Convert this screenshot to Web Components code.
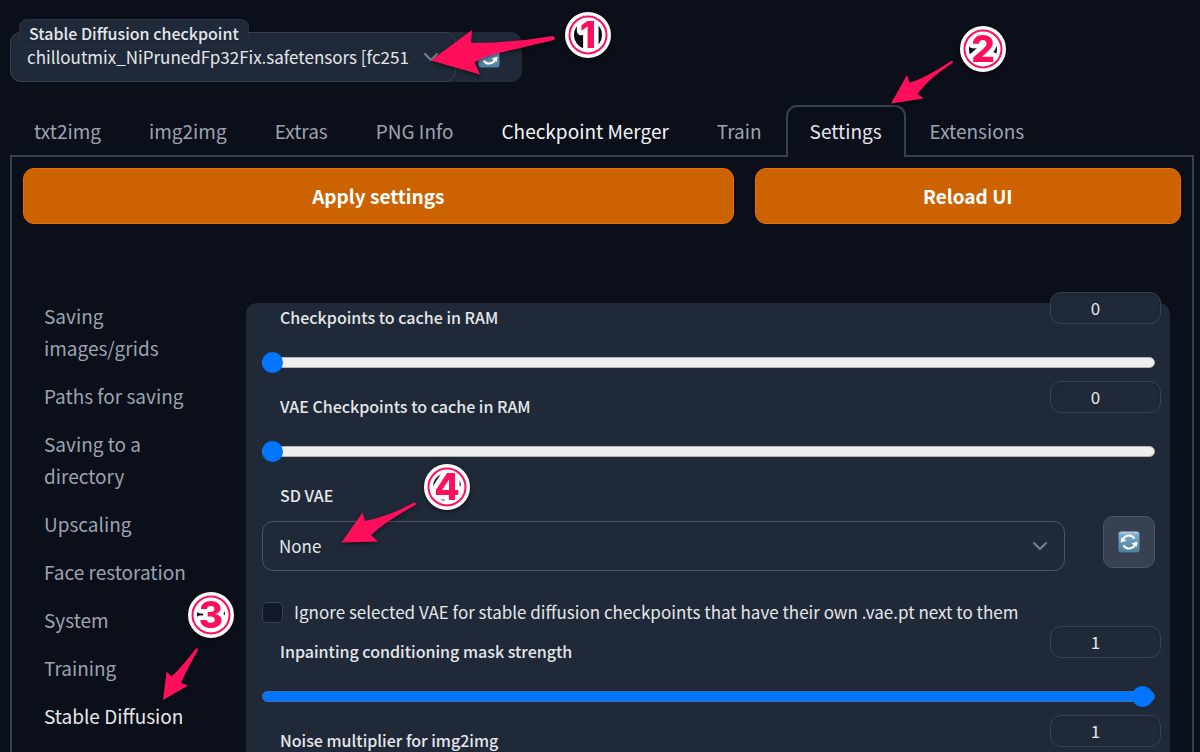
<!DOCTYPE html>
<html lang="en">
<head>
<meta charset="utf-8">
<meta name="viewport" content="width=device-width, initial-scale=1">
<title>Stable Diffusion</title>
<style>
  :root {
    --bg: #0b0f19;
    --block: #1f2937;
    --line: #374151;
    --line-strong: #4b5563;
    --text: #e5e7eb;
    --muted: #9ca3af;
    --accent: #cc6300;
    --blue: #0075ff;
    --pink: #ff0f5b;
    --radius: 11px;
    --fs-sm: 16px;
    --fs: 17px;
    --fs-lg: 19px;
  }
  html, body { height: 100%; }
  body {
    margin: 0;
    background: var(--bg);
    color: var(--text);
    font-family: "Noto Sans CJK JP", "Noto Sans", sans-serif;
    font-size: var(--fs);
  }
</style>
</head>
<body>
<sd-app></sd-app>

<script>
const define = (name, html, setup) => {
  const template = document.createElement('template');
  template.innerHTML = `<style>
    *, *::before, *::after { box-sizing: border-box; }
    button, input, select { font: inherit; color: inherit; margin: 0; }
  </style>${html}`;
  customElements.define(name, class extends HTMLElement {
    constructor() {
      super();
      this.attachShadow({ mode: 'open' }).append(template.content.cloneNode(true));
    }
    connectedCallback() { if (setup) setup(this, this.shadowRoot); }
  });
};

define('sd-refresh', `
  <style>
    :host { display: block; }
    button { display: flex; align-items: center; justify-content: center; width: 100%; height: 100%;
      padding: 0; border: 1px solid var(--line-strong); border-radius: 10px; background: var(--line); }
    :host([plain]) button { border-color: transparent; background: none; }
    svg { display: block; width: 22px; height: 22px; }
  </style>
  <button aria-label="Refresh">
    <svg viewBox="0 0 22 22">
      <defs><linearGradient id="g" x2="0" y2="1">
        <stop offset="0" stop-color="#b4d3e4"/><stop offset=".2" stop-color="#75a6c6"/><stop offset="1" stop-color="#4f7f9f"/>
      </linearGradient></defs>
      <rect x=".5" y=".5" width="21" height="21" rx="3" fill="url(#g)"/>
      <g fill="none" stroke="#fff" stroke-width="2.2">
        <path d="M4.6 10.2A6.4 6.4 0 0 1 16.4 7.6"/><path d="M17.4 11.8A6.4 6.4 0 0 1 5.6 14.4"/>
      </g>
      <path d="M2.6 11.6 3.4 6.2 8.4 9.8ZM19.6 10.4 18.8 15.8 13.4 12.4Z" fill="#fff"/>
    </svg>
  </button>`);

define('sd-dropdown', `
  <style>
    :host { display: block; position: relative; height: 50px; }
    select { appearance: none; display: block; width: 100%; height: 100%; padding: 0 40px 0 16px; line-height: 26px;
      border: 1px solid var(--line-strong); border-radius: var(--radius); background: var(--block); text-overflow: clip; }
    svg { position: absolute; right: 17px; top: 20px; width: 16px; height: 10px; pointer-events: none;
      fill: none; stroke: #78808d; stroke-width: 2; stroke-linecap: round; stroke-linejoin: round; }
  </style>
  <select><option></option></select>
  <svg viewBox="0 0 16 10"><path d="M2 2l6 6 6-6"/></svg>`,
  (el, root) => {
    root.querySelector('option').textContent = el.getAttribute('value');
    root.querySelector('select').setAttribute('aria-label', el.getAttribute('label'));
  });

define('sd-quick', `
  <style>
    :host { display: block; }
    .group { position: relative; display: flex; width: 512px; max-width: 100%; border-radius: var(--radius); background: var(--block); }
    sd-dropdown { flex: 1; --line-strong: var(--line); }
    sd-refresh { width: 66px; }
    .label { position: absolute; left: 9px; top: -13px; padding: 0 9px; line-height: 26px; z-index: 1;
      font-size: var(--fs-sm); font-weight: 500;
      border: 1px solid #28313f; border-radius: 8px; background: var(--block); }
  </style>
  <div class="group">
    <span class="label">Stable Diffusion checkpoint</span>
    <sd-dropdown label="Stable Diffusion checkpoint" value="chilloutmix_NiPrunedFp32Fix.safetensors [fc251"></sd-dropdown>
    <sd-refresh plain></sd-refresh>
  </div>`);

define('sd-tab', `
  <style>
    :host { display: block; }
    button { height: 52px; padding: 0 22px 4px; border: 2px solid transparent; border-bottom: 0; background: none;
      border-radius: var(--radius) var(--radius) 0 0; color: var(--muted); font-size: var(--fs-lg); white-space: nowrap; }
    :host([hot]) button { color: #f3f4f6; }
    :host([selected]) button { border-color: var(--line); background: var(--bg); color: var(--text); }
  </style>
  <button role="tab"><slot></slot></button>`);

define('sd-tabs', `
  <style>
    :host { display: flex; position: relative; z-index: 1; margin-bottom: -2px; }
  </style>
  <slot></slot>`);

define('sd-primary', `
  <style>
    :host { display: block; }
    button { width: 100%; height: 56px; padding: 0 0 2px; border: 1px solid #ea6f05; border-radius: var(--radius);
      background: var(--accent); color: #fff; font-size: var(--fs-lg); font-weight: 600; }
  </style>
  <button><slot></slot></button>`);

define('sd-nav-item', `
  <style>
    :host { display: block; }
    button { display: block; width: 100%; padding: 7px 21px 9px; border: 0; background: none; text-align: left;
      font-size: var(--fs-lg); line-height: 32px; color: var(--muted); }
    :host([selected]) button { color: var(--text); }
  </style>
  <button><slot></slot></button>`);

define('sd-slider', `
  <style>
    :host { display: block; height: 89px; }
    .head { display: flex; justify-content: space-between; align-items: flex-start; height: 38px; }
    label { padding: 12px 0 0 18px; line-height: 26px; font-size: var(--fs-sm); font-weight: 500; }
    input[type=number] { appearance: textfield; width: 111px; height: 32px; margin-right: -6px; padding: 0 20px 2px 0;
      text-align: center; border: 1px solid var(--line); border-radius: var(--radius); background: var(--block);
      box-shadow: inset 0 2px 4px rgb(0 0 0 / .08); }
    input::-webkit-inner-spin-button { appearance: none; margin: 0; }
    input[type=range] { appearance: none; display: block; width: 100%; height: 20px; margin-top: 22px; background: none; }
    input::-webkit-slider-runnable-track { height: 11px; border: 1px solid #b2b2b2; border-radius: 6px; background: #efefef; }
    input.full::-webkit-slider-runnable-track { background: var(--blue); border-color: #3b70b8; }
    input::-webkit-slider-thumb { appearance: none; width: 21px; height: 21px; margin: -6px -1px 0; border-radius: 50%; background: var(--blue); }
  </style>
  <div class="head"><label for="r"></label><input type="number"></div>
  <input id="r" type="range" min="0" max="1">`,
  (el, root) => {
    const label = el.getAttribute('label'), value = el.getAttribute('value');
    const number = root.querySelector('[type=number]'), range = root.querySelector('[type=range]');
    root.querySelector('label').textContent = label;
    number.setAttribute('aria-label', label);
    number.value = range.value = value;
    range.classList.toggle('full', value === '1');
  });

define('sd-vae', `
  <style>
    :host { display: block; }
    .label { padding: 12px 0 0 18px; line-height: 26px; font-size: var(--fs-sm); font-weight: 500; }
    .row { display: flex; gap: 38px; height: 55px; margin-top: 8px; }
    sd-dropdown { flex: 1; align-self: flex-end; }
    sd-refresh { width: 52px; height: 52px; }
  </style>
  <div class="label">SD VAE</div>
  <div class="row"><sd-dropdown label="SD VAE" value="None"></sd-dropdown><sd-refresh></sd-refresh></div>`);

define('sd-check', `
  <style>
    :host { display: block; margin: 28px 0 1px; }
    label { display: flex; align-items: center; gap: 11px; line-height: 26px; }
    input { appearance: none; width: 21px; height: 21px; border: 1px solid var(--line); border-radius: 5px; background: #111827; }
  </style>
  <label><input type="checkbox"><slot></slot></label>`);

/* Numbered markers laid freely over the page, each with its arrow. */
define('sd-callouts', `
  <style>
    :host { position: absolute; inset: 0; overflow: hidden; pointer-events: none; z-index: 2; }
    svg { display: block; width: 1200px; height: 752px; filter: drop-shadow(0 2px 2px rgb(0 0 0 / .45)); }
    path { fill: var(--pink); }
    .rim { fill: none; stroke: #fff; stroke-width: 9; }
    .ring { fill: none; stroke: var(--pink); stroke-width: 2; }
    text { font: 800 37px Inter, sans-serif; text-anchor: middle; fill: var(--pink);
      stroke: #fff; stroke-width: 9; stroke-linejoin: round; paint-order: stroke; }
  </style>
  <svg viewBox="0 0 1200 752">
    <path d="M431 60.5 472 30 471 43Q512 43 553 36 556 37.500 554 40 512 50 494 54 482 58 474.500 62.500L480 74.500Z"/>
    <path d="M891 103.500 907 75 909.500 82.500Q924 79 951 61 954 61 952.500 63 928 79 917.500 94L923.500 98.500Z"/>
    <path d="M163 700 166.500 671.500 171.500 676.500Q181 668 196 648.500 198.500 647.500 198 650 187 669 181 683L188 685.500Z"/>
    <path d="M341.500 542.500 362.500 512.500 365 521Q390 516 414 502.500 417 502.500 415.500 505 386 521 371 535L378 541.500Z"/>
  </svg>`,
  (el, root) => {
    const svg = root.querySelector('svg');
    [[588, 35], [983, 49], [211, 615], [447, 487]].forEach(([x, y], i) => {
      svg.insertAdjacentHTML('beforeend', `<g transform="translate(${x} ${y})">
        <circle class="rim" r="18.5"/><text y="13">${i + 1}</text><circle class="ring" r="18.500"/></g>`);
    });
  });

define('sd-app', `
  <style>
    :host { display: block; position: relative; height: 100%; overflow: hidden; }
    .page { display: flex; flex-direction: column; min-height: 100%; padding: 32px 6px 0 10px; }
    sd-tabs { margin-top: 23px; }
    main { flex: 1; padding: 11px; border: 2px solid var(--line); border-bottom: 0; }
    .actions { display: grid; grid-template-columns: 5fr 3fr; gap: 21px; }
    .content { display: grid; grid-template-columns: 202px 1fr; gap: 21px; margin-top: 69px; padding-right: 11px; }
    .form { margin-top: 10px; padding: 0 15px 0 16px; border-radius: var(--radius); background: var(--block); }
    .rows { margin-top: -11px; }
  </style>
  <div class="page">
    <sd-quick></sd-quick>
    <sd-tabs role="tablist">
      <sd-tab>txt2img</sd-tab><sd-tab>img2img</sd-tab><sd-tab>Extras</sd-tab><sd-tab>PNG Info</sd-tab>
      <sd-tab hot>Checkpoint Merger</sd-tab><sd-tab>Train</sd-tab><sd-tab selected>Settings</sd-tab><sd-tab>Extensions</sd-tab>
    </sd-tabs>
    <main>
      <div class="actions"><sd-primary>Apply settings</sd-primary><sd-primary>Reload UI</sd-primary></div>
      <div class="content">
        <nav>
          <sd-nav-item>Saving images/grids</sd-nav-item>
          <sd-nav-item>Paths for saving</sd-nav-item>
          <sd-nav-item>Saving to a directory</sd-nav-item>
          <sd-nav-item>Upscaling</sd-nav-item>
          <sd-nav-item>Face restoration</sd-nav-item>
          <sd-nav-item>System</sd-nav-item>
          <sd-nav-item>Training</sd-nav-item>
          <sd-nav-item selected>Stable Diffusion</sd-nav-item>
        </nav>
        <section class="form"><div class="rows">
          <sd-slider label="Checkpoints to cache in RAM" value="0"></sd-slider>
          <sd-slider label="VAE Checkpoints to cache in RAM" value="0"></sd-slider>
          <sd-vae></sd-vae>
          <sd-check>Ignore selected VAE for stable diffusion checkpoints that have their own .vae.pt next to them</sd-check>
          <sd-slider label="Inpainting conditioning mask strength" value="1"></sd-slider>
          <sd-slider label="Noise multiplier for img2img" value="1"></sd-slider>
        </div></section>
      </div>
    </main>
  </div>
  <sd-callouts></sd-callouts>`);
</script>
</body>
</html>
